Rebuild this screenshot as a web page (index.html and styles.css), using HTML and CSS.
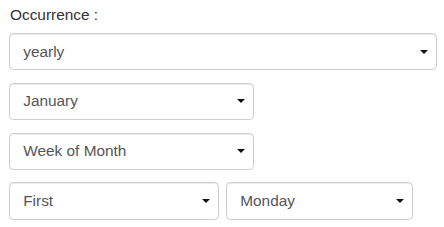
FILE: index.html
```html
<!DOCTYPE html>
<html lang="en">
<head>
    <meta charset="UTF-8">
    <meta name="viewport" content="width=device-width, initial-scale=1.0">
    <title>Occurrence</title>
    <link rel="stylesheet" href="styles.css">
</head>
<body>
    <div class="recurrence-form">
        <label class="field-label" for="occurrence">Occurrence :</label>

        <div class="select-wrap full">
            <select id="occurrence" class="form-select">
                <option>yearly</option>
                <option>monthly</option>
                <option>weekly</option>
            </select>
        </div>

        <div class="select-wrap half">
            <select class="form-select">
                <option>January</option>
                <option>February</option>
            </select>
        </div>

        <div class="select-wrap half">
            <select class="form-select">
                <option>Week of Month</option>
                <option>Day of Month</option>
            </select>
        </div>

        <div class="select-row">
            <div class="select-wrap week">
                <select class="form-select">
                    <option>First</option>
                    <option>Second</option>
                </select>
            </div>
            <div class="select-wrap day">
                <select class="form-select">
                    <option>Monday</option>
                    <option>Tuesday</option>
                </select>
            </div>
        </div>
    </div>
</body>
</html>
```

FILE: styles.css
```css
body {
    margin: 0;
    background: #fff;
    font-family: "Liberation Sans", Arial, sans-serif;
    font-size: 15.4px;
    line-height: 22px;
    color: #333;
}
.recurrence-form {
    padding: 4px 0 0 9px;
    display: flex;
    flex-direction: column;
    align-items: flex-start;
    gap: 12.4px;
}
.field-label {
    display: block;
    padding-left: 1px;
    margin-bottom: -5.4px;
}
.select-row {
    display: flex;
    gap: 7px;
}
.select-wrap {
    position: relative;
}
.select-wrap::after {
    content: "";
    position: absolute;
    right: 9px;
    top: 50%;
    margin-top: -2px;
    border-left: 4px solid transparent;
    border-right: 4px solid transparent;
    border-top: 4px solid #111;
    pointer-events: none;
}
.full { width: 428px; }
.half { width: 245px; }
.week { width: 210px; }
.day { width: 187px; }
.form-select {
    display: block;
    width: 100%;
    height: 37.4px;
    padding: 6.6px 13.2px;
    font-family: inherit;
    font-size: 15.4px;
    line-height: 22px;
    color: #555;
    background: #fff;
    border: 1px solid #ccc;
    border-radius: 4.4px;
    box-shadow: inset 0 1px 1px rgba(0, 0, 0, .075);
    appearance: none;
    -webkit-appearance: none;
    box-sizing: border-box;
}
```
